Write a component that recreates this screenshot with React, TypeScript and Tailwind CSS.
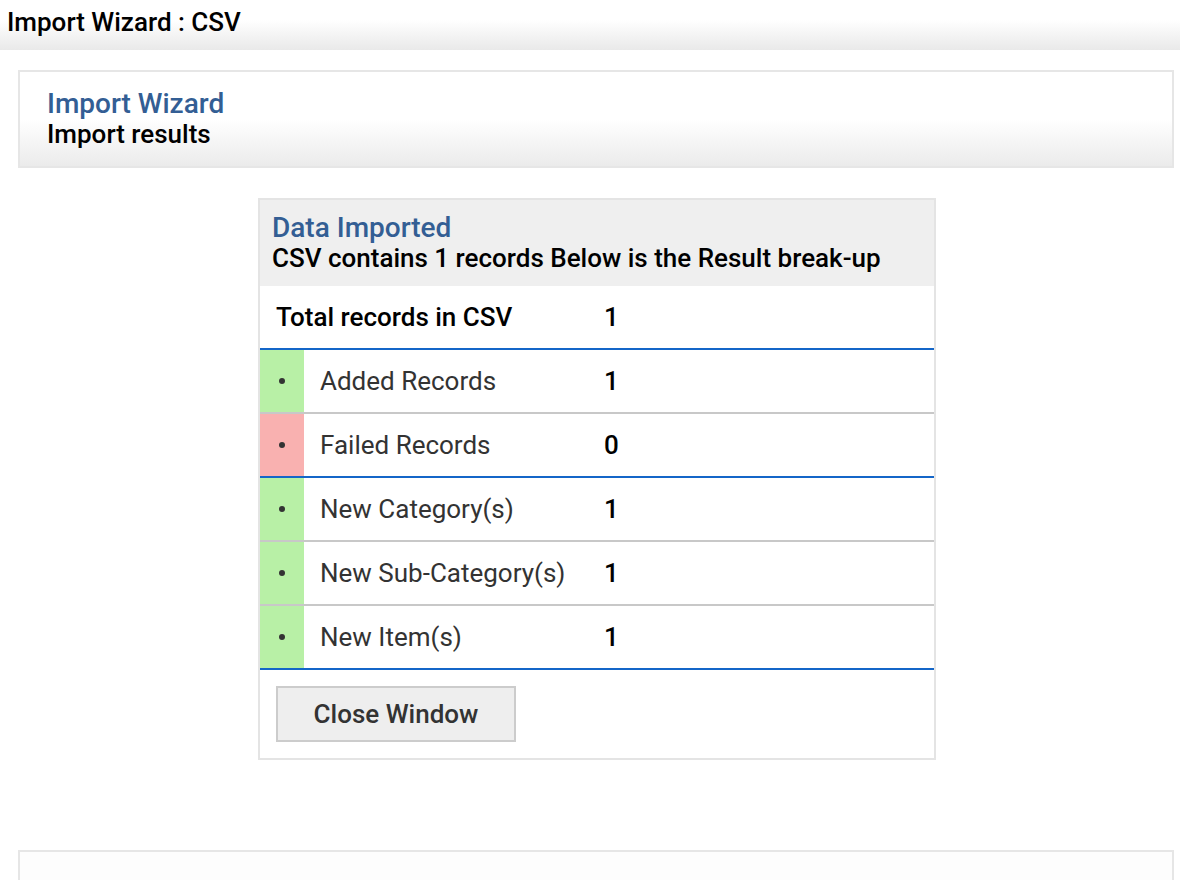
import React from "react";

const rows = [
  { label: "Added Records", value: "1", color: "bg-[#b8f0a6]", border: "border-[#c8c8c8]" },
  { label: "Failed Records", value: "0", color: "bg-[#f9b1b0]", border: "border-[#1466c8]" },
  { label: "New Category(s)", value: "1", color: "bg-[#b8f0a6]", border: "border-[#c8c8c8]" },
  { label: "New Sub-Category(s)", value: "1", color: "bg-[#b8f0a6]", border: "border-[#c8c8c8]" },
  { label: "New Item(s)", value: "1", color: "bg-[#b8f0a6]", border: "border-[#1466c8]" },
];

export default function App() {
  return (
    <div className="w-[1180px] h-[880px] overflow-hidden bg-white font-['Roboto',sans-serif]">
      <div className="h-[50px] bg-gradient-to-b from-white from-40% to-[#e9e9e9] px-[7px] pt-[7px]">
        <div className="text-[26px] leading-[30px] font-medium text-black">Import Wizard : CSV</div>
      </div>
      <div className="ml-[18px] mr-[6px] mt-[20px]">
        <div className="h-[98px] border-2 border-[#e6e6e6] bg-gradient-to-b from-white from-50% to-[#ebebeb] pl-[27px] pt-[16px]">
          <div className="text-[28px] leading-[31px] font-medium text-[#335e94]">Import Wizard</div>
          <div className="text-[26px] leading-[31px] font-medium text-black">Import results</div>
        </div>
        <div className="flex justify-center mt-[30px]">
          <div className="w-[678px] ml-[2px] border-2 border-[#e4e4e4] bg-white">
            <div className="h-[86px] bg-[#efefef] pl-[12px] pt-[12px]">
              <div className="text-[28px] leading-[31px] font-medium text-[#335e94]">Data Imported</div>
              <div className="text-[26px] leading-[31px] font-medium text-black">CSV contains 1 records Below is the Result break-up</div>
            </div>
            <div className="flex h-[64px] items-center border-b-2 border-[#1466c8]">
              <div className="w-[344px] pl-[16px] text-[26px] font-medium text-black">Total records in CSV</div>
              <div className="text-[26px] font-medium text-black">1</div>
            </div>
            {rows.map((r) => (
              <div key={r.label} className={`flex h-[64px] border-b-2 ${r.border}`}>
                <div className={`w-[44px] ${r.color} flex items-center justify-center`}>
                  <span className="w-[6px] h-[6px] rounded-full bg-[#333]"></span>
                </div>
                <div className="w-[300px] flex items-center pl-[16px] text-[26px] text-[#333]">{r.label}</div>
                <div className="flex items-center text-[26px] font-medium text-black">{r.value}</div>
              </div>
            ))}
            <div className="pl-[16px] pt-[16px] pb-[16px]">
              <button className="w-[240px] h-[56px] bg-[#eeeeee] border-2 border-[#cccccc] text-[26px] font-medium text-[#333]">Close Window</button>
            </div>
          </div>
        </div>
        <div className="mt-[90px] h-[60px] border-2 border-[#e6e6e6] bg-[#fdfdfd]"></div>
      </div>
    </div>
  );
}
